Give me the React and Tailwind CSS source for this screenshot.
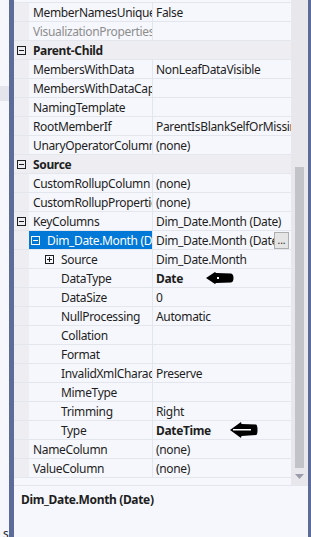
import React from "react";

const rows = [
  { name: "MemberNamesUnique", value: "False", depth: 1 },
  { name: "VisualizationProperties", value: "", depth: 1, disabled: true },
  { cat: "Parent-Child" },
  { name: "MembersWithData", value: "NonLeafDataVisible", depth: 1 },
  { name: "MembersWithDataCaption", value: "", depth: 1 },
  { name: "NamingTemplate", value: "", depth: 1 },
  { name: "RootMemberIf", value: "ParentIsBlankSelfOrMissing", depth: 1 },
  { name: "UnaryOperatorColumn", value: "(none)", depth: 1 },
  { cat: "Source" },
  { name: "CustomRollupColumn", value: "(none)", depth: 1 },
  { name: "CustomRollupProperties", value: "(none)", depth: 1 },
  { name: "KeyColumns", value: "Dim_Date.Month (Date)", depth: 1, icon: "minus" },
  { name: "Dim_Date.Month (Date)", value: "Dim_Date.Month (Date)", depth: 2, icon: "minus", selected: true, button: true },
  { name: "Source", value: "Dim_Date.Month", depth: 3, icon: "plus" },
  { name: "DataType", value: "Date", depth: 3, bold: true, arrow: 1 },
  { name: "DataSize", value: "0", depth: 3 },
  { name: "NullProcessing", value: "Automatic", depth: 3 },
  { name: "Collation", value: "", depth: 3 },
  { name: "Format", value: "", depth: 3 },
  { name: "InvalidXmlCharacters", value: "Preserve", depth: 3 },
  { name: "MimeType", value: "", depth: 3 },
  { name: "Trimming", value: "Right", depth: 3 },
  { name: "Type", value: "DateTime", depth: 3, bold: true, arrow: 2 },
  { name: "NameColumn", value: "(none)", depth: 1 },
  { name: "ValueColumn", value: "(none)", depth: 1 },
];

function Box({ type, light }) {
  return (
    <div
      className={
        "w-[9px] h-[9px] shrink-0 border flex items-center justify-center relative " +
        (light ? "border-white bg-[#0078d7]" : "border-[#1e1e1e]")
      }
    >
      <div className={"w-[5px] h-px " + (light ? "bg-white" : "bg-[#1e1e1e]")} />
      {type === "plus" && (
        <div className={"absolute w-px h-[5px] " + (light ? "bg-white" : "bg-[#1e1e1e]")} />
      )}
    </div>
  );
}

function Arrow1() {
  return (
    <svg width="28" height="12" viewBox="0 0 28 12" className="ml-[23px] -mt-px">
      <path d="M0 6 L9 0 L10 1 L25 1.5 Q27.5 2 27.5 6 Q27.5 10 25 10.5 L10 11 L9 12 Z" fill="#000" />
      <rect x="11" y="5" width="2" height="2" fill="#fff" />
    </svg>
  );
}

function Arrow2() {
  return (
    <svg width="28" height="16" viewBox="0 0 28 16" className="ml-[19px] -mt-px">
      <path d="M0 8 L11 0 L11.5 2 L26 2.5 Q27.5 3 27.5 8 Q27.5 13 26 13 L11.5 14 L11 16 Z" fill="#000" />
      <rect x="3" y="7" width="18" height="1.5" fill="#fff" />
    </svg>
  );
}

function Row({ r }) {
  if (r.cat) {
    return (
      <div className="flex h-[19px] border-b border-[#e4e6ee] bg-[#eeeef2] items-center">
        <div className="w-[15px] shrink-0 flex items-center pl-[3px]">
          <Box type="minus" />
        </div>
        <div className="pl-[4px] pt-px font-bold text-[#1e1e1e]">{r.cat}</div>
      </div>
    );
  }
  const pad =
    r.depth === 1
      ? "pl-[4px]"
      : r.depth === 2
      ? r.icon
        ? "pl-[2px]"
        : "pl-[18px]"
      : r.icon
      ? "pl-[16px]"
      : "pl-[32px]";
  return (
    <div className="flex h-[19px] border-b border-[#e4e6ee]">
      <div className="w-[15px] shrink-0 bg-[#eeeef2] flex items-center pl-[3px]">
        {r.depth === 1 && r.icon && <Box type={r.icon} />}
      </div>
      <div
        className={
          "w-[124px] shrink-0 flex items-center overflow-hidden whitespace-nowrap border-r border-[#e4e6ee] " +
          pad +
          (r.selected ? " bg-[#0078d7] text-white" : r.disabled ? " text-[#8d8d8d]" : " text-[#1e1e1e]")
        }
      >
        {r.depth > 1 && r.icon && <Box type={r.icon} light={r.selected} />}
        <span className={"pt-px " + (r.depth > 1 && r.icon ? "ml-[7px]" : "")}>{r.name}</span>
      </div>
      <div className="flex-1 min-w-0 flex items-center overflow-hidden whitespace-nowrap pl-[3px] text-[#1e1e1e] relative">
        <span className={"pt-px " + (r.bold ? "font-bold" : "")}>{r.value}</span>
        {r.arrow === 1 && <Arrow1 />}
        {r.arrow === 2 && <Arrow2 />}
        {r.button && (
          <div className="absolute right-[2px] top-[1px] w-[15px] h-[17px] bg-[#e5e5e5] border border-[#adadad] flex items-end justify-center pb-[3px] text-[10px] leading-none tracking-normal text-[#1e1e1e]">
            ...
          </div>
        )}
      </div>
    </div>
  );
}

export default function App() {
  return (
    <div
      className="w-[311px] h-[537px] flex bg-[#f6f7fc] overflow-hidden text-[12px] leading-none tracking-[-0.35px]"
      style={{ fontFamily: '"Noto Sans", "Open Sans", sans-serif' }}
    >
      <div className="w-[9px] shrink-0 flex flex-col">
        <div className="h-[86px]" />
        <div className="h-[15px] bg-[#e4e5ec]" />
        <div className="flex-1" />
        <div className="h-[6px] overflow-hidden text-[12px] leading-[6px] pl-[3px] text-[#1e1e1e]">s</div>
      </div>
      <div className="w-[5px] shrink-0 bg-[#5d6b99]" />
      <div className="flex-1 min-w-0 flex flex-col">
        <div className="h-[486px] flex border-b border-[#e4e6ee]">
          <div className="flex-1 min-w-0 flex flex-col">
            <div className="h-[2px]" />
            <div className="h-px bg-[#e4e6ee]" />
            {rows.map((r, i) => (
              <Row key={i} r={r} />
            ))}
          </div>
          <div className="w-[17px] shrink-0 bg-[#e8e8ec] flex flex-col pt-[167px] pl-[4px]">
            <div className="w-[9px] h-[301px] bg-[#c2c3c9]" />
            <svg width="9" height="5" viewBox="0 0 9 5" className="mt-[6px]">
              <path d="M0 0 H9 L4.5 5 Z" fill="#9a9cab" />
            </svg>
          </div>
        </div>
        <div className="flex-1 pl-[7px] pt-[8px]">
          <div className="font-bold text-[#1e1e1e]">Dim_Date.Month (Date)</div>
        </div>
      </div>
      <div className="w-[3px] shrink-0 bg-[#5d6b99]" />
    </div>
  );
}
